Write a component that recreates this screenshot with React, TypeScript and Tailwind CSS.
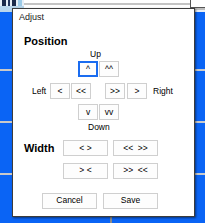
import React from "react";

const font = { fontFamily: '"Liberation Sans", Arial, sans-serif' };

function Btn({
  children,
  w = "w-[20px]",
  focused = false,
}: {
  children: React.ReactNode;
  w?: string;
  focused?: boolean;
}) {
  return (
    <button
      type="button"
      className={`${w} flex h-[16px] shrink-0 items-center justify-center bg-[#fdfdfd] text-[8.5px] leading-none text-black ${
        focused ? "border-2 border-[#1a6cf0]" : "border border-[#cfcfcf]"
      }`}
    >
      {children}
    </button>
  );
}

function Backdrop() {
  return (
    <div className="flex h-full w-full flex-col">
      <div className="flex h-[12px] w-full bg-[#0a62f2]">
        <div className="flex h-full w-[24px] flex-col">
          <div className="flex h-[6px] gap-[2px] bg-[#e6eef6] px-[2px]">
            <div className="h-full w-[4px] bg-[#1b2a4a]" />
            <div className="h-full w-[3px] bg-[#24365c]" />
            <div className="h-full w-[4px] bg-[#1b2a4a]" />
            <div className="h-full w-[5px] bg-[#9ccbe8]" />
          </div>
          <div className="h-[6px] bg-[#b9d6ec]" />
        </div>
        <div className="flex h-full flex-1 flex-col bg-white">
          <div className="mt-[3px] h-[2px] w-[166px] bg-[#c4c4c4]" />
        </div>
        <div className="flex h-full w-[15px] flex-col">
          <div className="h-[8px] border-b border-l border-[#555] bg-white" />
          <div className="h-[2px] bg-[#bdbdbd]" />
          <div className="h-[2px] bg-[#e8eef5]" />
        </div>
      </div>
      <div className="h-[57px] bg-[#0a64f5]" />
      <div className="h-[2px] bg-[#c9c9c9]" />
      <div className="h-[50px] bg-[#0a64f5]" />
      <div className="h-[2px] bg-[#c9c9c9]" />
      <div className="h-[50px] bg-[#0a64f5]" />
      <div className="h-[2px] bg-[#c9c9c9]" />
      <div className="flex flex-1 bg-[#0a64f5]">
        <div className="w-[110px]" />
        <div className="w-[2px] bg-[#8a8a8a]" />
      </div>
    </div>
  );
}

export default function App() {
  return (
    <div className="relative h-[223px] w-[205px] overflow-hidden" style={font}>
      <Backdrop />
      <div className="absolute left-[12px] top-[8px] flex h-[209px] w-[183px] flex-col border border-[#3c3c3c] bg-white text-black shadow-[1px_1px_2px_rgba(0,0,0,0.5)]">
        <div className="h-[16px] pl-[6px] pt-[3px] text-[9px] leading-[10px] text-[#222]">
          Adjust
        </div>

        <div className="mt-[10px] h-[13px] pl-[11px] text-[11px] font-bold leading-[13px]">
          Position
        </div>
        <div className="mt-[1px] h-[11px] pl-[77px] text-[8.5px] leading-[11px]">Up</div>

        <div className="mt-[1px] flex gap-[1px] pl-[65px]">
          <Btn focused>^</Btn>
          <Btn>^^</Btn>
        </div>

        <div className="mt-[6px] flex items-center pl-[19px]">
          <span className="w-[18px] text-[8.5px]">Left</span>
          <div className="flex gap-[1px]">
            <Btn>&lt;</Btn>
            <Btn>&lt;&lt;</Btn>
          </div>
          <div className="ml-[14px] flex gap-[2px]">
            <Btn>&gt;&gt;</Btn>
            <Btn>&gt;</Btn>
          </div>
          <span className="ml-[6px] text-[8.5px]">Right</span>
        </div>

        <div className="mt-[5px] flex gap-[1px] pl-[65px]">
          <Btn>v</Btn>
          <Btn>vv</Btn>
        </div>

        <div className="mt-[2px] h-[11px] pl-[75px] text-[8.5px] leading-[11px]">
          Down
        </div>

        <div className="mt-[7px] flex items-center pl-[11px]">
          <span className="w-[39px] text-[11px] font-bold">Width</span>
          <div className="flex gap-[5px]">
            <Btn w="w-[45px]">&lt; &gt;</Btn>
            <Btn w="w-[45px]">&lt;&lt;&nbsp;&nbsp;&gt;&gt;</Btn>
          </div>
        </div>

        <div className="mt-[6px] flex gap-[5px] pl-[50px]">
          <Btn w="w-[45px]">&gt; &lt;</Btn>
          <Btn w="w-[45px]">&gt;&gt;&nbsp;&nbsp;&lt;&lt;</Btn>
        </div>

        <div className="mt-[14px] flex gap-[6px] pl-[29px]">
          <Btn w="w-[55px]">Cancel</Btn>
          <Btn w="w-[55px]">Save</Btn>
        </div>
      </div>
    </div>
  );
}
